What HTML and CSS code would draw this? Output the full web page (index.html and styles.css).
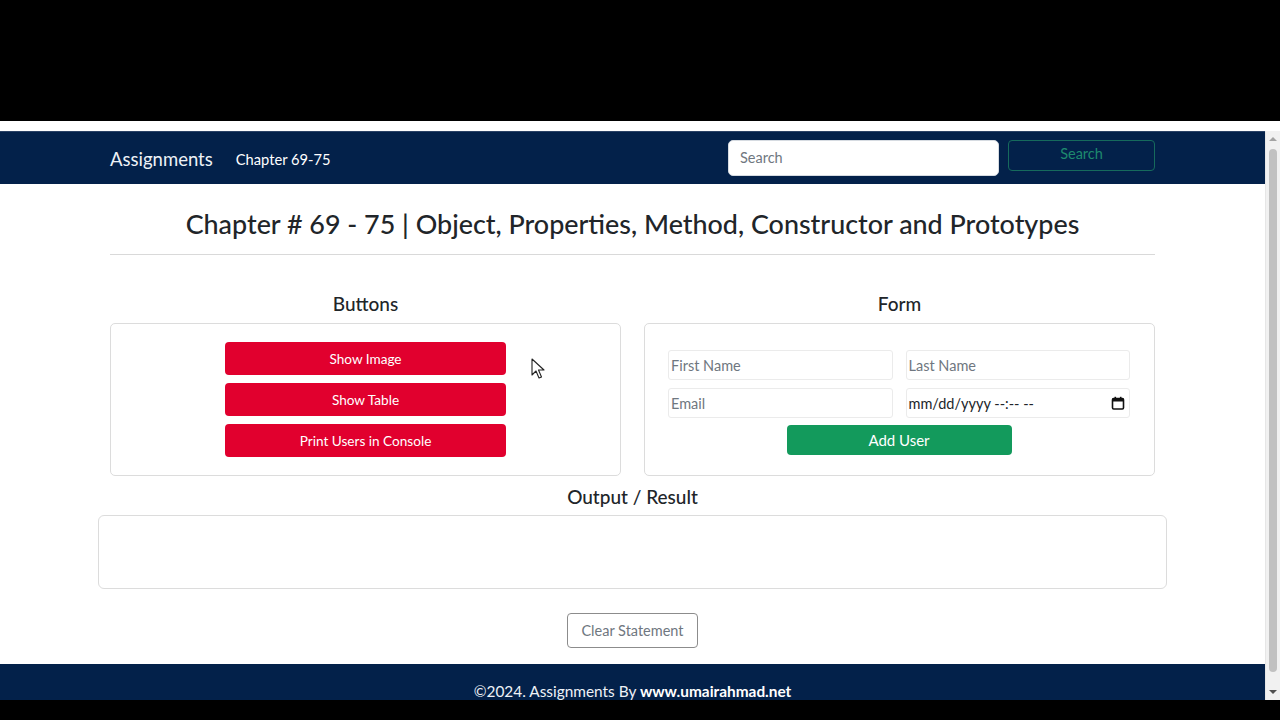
FILE: index.html
```html
<!DOCTYPE html>
<html lang="en">
<head>
<meta charset="utf-8">
<title>Chapter 69-75</title>
<link rel="stylesheet" href="styles.css">
</head>
<body>
<div class="frame">
  <div class="band-top"></div>
  <div class="chrome-strip"></div>
  <div class="viewport">
    <div class="page">
      <nav class="navbar">
        <div class="nav-inner">
          <a class="brand" href="#">Assignments</a>
          <a class="nav-link" href="#">Chapter 69-75</a>
          <form class="search">
            <input class="search-input" type="text" placeholder="Search">
            <button class="search-btn" type="button">Search</button>
          </form>
        </div>
      </nav>
      <main class="container">
        <h1 class="title">Chapter # 69 - 75 | Object, Properties, Method, Constructor and Prototypes</h1>
        <hr class="rule">
        <div class="panels">
          <section class="panel">
            <h2 class="panel-title">Buttons</h2>
            <div class="card card-buttons">
              <button class="btn-red" type="button">Show Image</button>
              <button class="btn-red" type="button">Show Table</button>
              <button class="btn-red" type="button">Print Users in Console</button>
            </div>
          </section>
          <section class="panel">
            <h2 class="panel-title">Form</h2>
            <div class="card card-form">
              <div class="form-grid">
                <input class="field" type="text" placeholder="First Name">
                <input class="field" type="text" placeholder="Last Name">
                <input class="field" type="email" placeholder="Email">
                <div class="field field-date">
                  <span class="date-text">mm/dd/yyyy --:-- --</span>
                  <svg class="cal-icon" width="14" height="14" viewBox="0 0 14 14">
                    <rect x="1.5" y="2.5" width="11" height="10.5" rx="1.2" fill="none" stroke="#111" stroke-width="1.6"/>
                    <rect x="1.5" y="2.5" width="11" height="3" fill="#111"/>
                    <rect x="3.5" y="0.8" width="1.6" height="2.5" fill="#111"/>
                    <rect x="8.9" y="0.8" width="1.6" height="2.5" fill="#111"/>
                  </svg>
                </div>
              </div>
              <button class="btn-green" type="button">Add User</button>
            </div>
          </section>
        </div>
        <h2 class="panel-title output-title">Output / Result</h2>
        <div class="output"></div>
        <div class="clear-row">
          <button class="btn-outline" type="button">Clear Statement</button>
        </div>
      </main>
      <footer class="footer">
        <p>©2024. Assignments By <strong>www.umairahmad.net</strong></p>
      </footer>
      <svg class="cursor" width="14" height="22" viewBox="0 0 14 22">
        <path d="M1 1 L1 17 L5 13 L8 20 L10.5 19 L7.5 12 L13 12 Z" fill="#fff" stroke="#222" stroke-width="1.1" stroke-linejoin="round"/>
      </svg>
    </div>
    <div class="scrollbar">
      <span class="arrow arrow-up"></span>
      <span class="thumb"></span>
      <span class="arrow arrow-down"></span>
    </div>
  </div>
  <div class="band-bottom"></div>
</div>
</body>
</html>
```

FILE: styles.css
```css
* { box-sizing: border-box; }

html, body {
  margin: 0;
  padding: 0;
  background: #000;
}

body {
  font-family: "Lato", "Noto Sans", "Liberation Sans", sans-serif;
  color: #212529;
  width: 1280px;
  height: 720px;
  overflow: hidden;
}

.frame {
  display: flex;
  flex-direction: column;
  height: 720px;
}

.band-top { height: 121px; background: #000; }
.chrome-strip { height: 10px; background: #fff; }
.band-bottom { height: 20px; background: #000; }

.viewport {
  display: flex;
  height: 569px;
  background: #fff;
}

.page {
  position: relative;
  flex: 1;
  overflow: hidden;
  display: flex;
  flex-direction: column;
}

/* navbar */
.navbar {
  height: 53px;
  flex: none;
  background: #03214a;
  border-top: 1px solid #2a4266;
}

.nav-inner {
  width: 1045px;
  margin: 0 auto;
  height: 100%;
  display: flex;
  align-items: center;
}

.brand {
  color: #eef2f7;
  font-size: 18.5px;
  text-decoration: none;
  margin-right: 23px;
  margin-top: 2px;
}

.nav-link {
  color: #ffffff;
  font-size: 14.7px;
  text-decoration: none;
  margin-top: 1px;
}

.search {
  margin-left: auto;
  display: flex;
  align-items: flex-start;
  gap: 9px;
  margin-top: -1px;
}

.search-input {
  width: 271px;
  height: 36px;
  border: 1px solid #d6dbe1;
  border-radius: 5px;
  padding: 0 11px;
  font-family: inherit;
  font-size: 14.5px;
  background: #fff;
  outline: none;
}
.search-input::placeholder { color: #6f7780; }

.search-btn {
  width: 147px;
  height: 31px;
  border: 1px solid #166a5c;
  border-radius: 4px;
  background: transparent;
  color: #1e8a6e;
  font-family: inherit;
  font-size: 14.5px;
  padding: 0 0 3px;
}

/* content */
.container {
  width: 1045px;
  margin: 0 auto;
  flex: none;
}

.title {
  margin: 23px 0 0;
  font-size: 26.9px;
  font-weight: 500;
  line-height: 34px;
  text-align: center;
  color: #212529;
}

.rule {
  margin: 13px 0 0;
  border: 0;
  border-top: 1px solid #d9d9d9;
}

.panels {
  display: grid;
  grid-template-columns: 511px 511px;
  justify-content: space-between;
  margin-top: 37px;
}

.panel-title {
  margin: 0 0 7px;
  font-size: 19px;
  font-weight: 500;
  line-height: 24px;
  text-align: center;
  color: #212529;
}

.card {
  height: 153px;
  border: 1px solid #dcdcdc;
  border-radius: 5px;
}

.card-buttons {
  display: flex;
  flex-direction: column;
  align-items: center;
  gap: 8px;
  padding-top: 18px;
}

.btn-red {
  width: 281px;
  height: 33px;
  border: 0;
  border-radius: 4px;
  background: #e1002e;
  color: #fff;
  font-family: inherit;
  font-size: 13.6px;
  padding: 0;
}

.card-form {
  display: flex;
  flex-direction: column;
  align-items: center;
  padding: 26px 24px 0 23px;
}

.form-grid {
  width: 100%;
  display: grid;
  grid-template-columns: 1fr 1fr;
  column-gap: 13px;
  row-gap: 8px;
}

.field {
  height: 30px;
  border: 1px solid #ebebeb;
  border-radius: 3px;
  padding: 0 2px;
  font-family: inherit;
  font-size: 14.5px;
  color: #212529;
  background: #fff;
  outline: none;
}
.field::placeholder { color: #6f7780; }

.field-date {
  display: flex;
  align-items: center;
  justify-content: space-between;
  padding: 0 4px 0 2px;
}

.date-text {
  color: #212529;
  font-size: 14.5px;
}

.cal-icon { flex: none; }

.btn-green {
  margin-top: 7px;
  width: 225px;
  height: 30px;
  border: 0;
  border-radius: 4px;
  background: #139a5c;
  color: #fff;
  font-family: inherit;
  font-size: 15px;
  padding: 0;
}

.output-title {
  margin-top: 9px;
  margin-bottom: 6px;
}

.output {
  height: 74px;
  margin: 0 -12px;
  border: 1px solid #dcdcdc;
  border-radius: 6px;
}

.clear-row {
  display: flex;
  justify-content: center;
  margin-top: 24px;
}

.btn-outline {
  width: 131px;
  height: 35px;
  border: 1px solid #8c8c8c;
  border-radius: 4px;
  background: #fff;
  color: #6f7780;
  font-family: inherit;
  font-size: 14.5px;
  padding: 0;
}

/* footer */
.footer {
  margin-top: 16px;
  flex: 1;
  background: #03214a;
  color: #eef2f7;
  text-align: center;
}

.footer p {
  margin: 18px 0 0;
  font-size: 15.4px;
}
.footer strong { color: #fff; font-weight: 700; }

/* mouse pointer overlay */
.cursor {
  position: absolute;
  left: 531px;
  top: 227px;
}

/* scrollbar */
.scrollbar {
  width: 15px;
  flex: none;
  background: #f1f1f1;
  display: flex;
  flex-direction: column;
  align-items: center;
  border-left: 1px solid #e6e6e6;
}

.arrow {
  width: 0;
  height: 0;
  border-left: 4px solid transparent;
  border-right: 4px solid transparent;
  margin: 6px 0;
}
.arrow-up { border-bottom: 4px solid #a3a3a3; }
.arrow-down { border-top: 4px solid #505050; }

.thumb {
  flex: 1;
  width: 8px;
  background: #c1c1c1;
  border-radius: 4px;
  margin: 2px 0 12px;
}
```
